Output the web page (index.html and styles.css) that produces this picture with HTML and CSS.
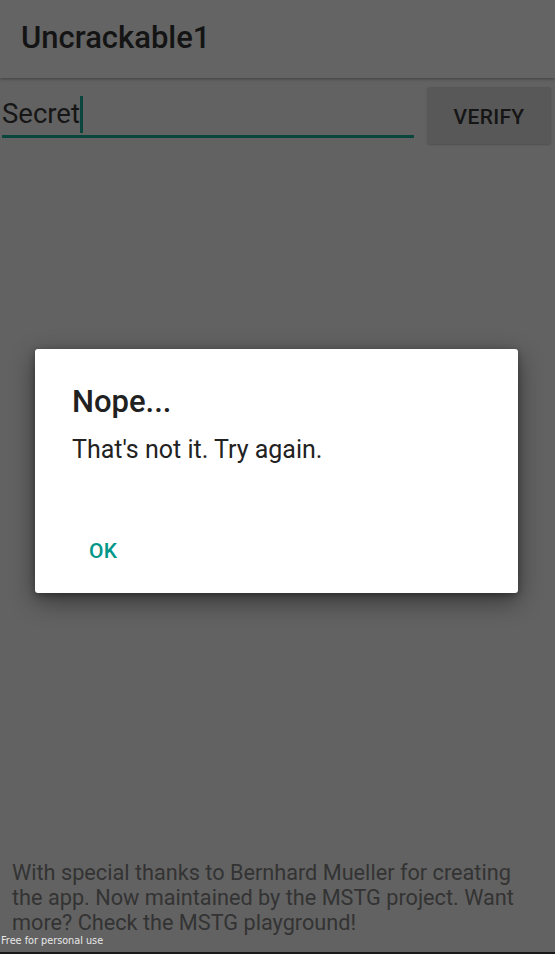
FILE: index.html
```html
<!DOCTYPE html>
<html>
<head>
<meta charset="utf-8">
<link rel="stylesheet" href="styles.css">
</head>
<body>
<div class="screen">
  <header class="appbar"><h1 class="title">Uncrackable1</h1></header>
  <div class="form">
    <div class="field"><span class="value">Secret</span><span class="cursor"></span></div>
    <div class="btn">VERIFY</div>
  </div>
  <div class="spacer"></div>
  <p class="thanks">With special thanks to Bernhard Mueller for creating the app. Now maintained by the MSTG project. Want more? Check the MSTG playground!</p>
  <div class="watermark">Free for personal use</div>
  <div class="bottomline"></div>
  <div class="dialog">
    <h2 class="dtitle">Nope...</h2>
    <p class="dbody">That's not it. Try again.</p>
    <div class="dactions"><span class="ok">OK</span></div>
  </div>
</div>
</body>
</html>
```
FILE: styles.css
```css
* { box-sizing: border-box; }
html, body { margin: 0; padding: 0; }
body { width: 555px; height: 954px; overflow: hidden; background: #626262; font-family: Roboto, "Noto Sans", sans-serif; }
.screen { position: relative; width: 555px; height: 954px; display: flex; flex-direction: column; }
.appbar { height: 78px; background: #646464; box-shadow: 0 1px 3px rgba(0,0,0,0.35); display: flex; align-items: center; padding-left: 21px; position: relative; z-index: 1; }
.title { margin: 0; font-size: 31px; font-weight: 500; color: #141414; letter-spacing: 0; padding-bottom: 4px; }
.form { display: flex; align-items: flex-start; padding: 8px 4px 0 2px; gap: 13px; }
.field { flex: 0 0 412px; height: 52px; border-bottom: 3px solid #0b463e; display: flex; align-items: center; padding-top: 7px; }
.value { font-size: 27.5px; color: #161616; line-height: 1; }
.cursor { display: inline-block; width: 3px; height: 37px; background: #0b463e; margin-left: 0; }
.btn { flex: 0 0 124px; height: 57px; margin-top: 1px; background: #585858; border-radius: 3px; box-shadow: 0 1px 2px rgba(0,0,0,0.2); display: flex; align-items: center; justify-content: center; font-size: 21px; font-weight: 500; color: #151515; letter-spacing: 0.3px; padding-top: 2px; }
.spacer { flex: 1; }
.thanks { margin: 0; padding: 0 20px 0 12px; font-size: 21.7px; line-height: 25px; color: #333333; }
.watermark { font-family: "DejaVu Sans", sans-serif; font-size: 9.7px; color: #e8e8e8; padding-left: 1px; height: 17px; line-height: 12px; margin-top: 0; }
.bottomline { height: 2px; background: #1a1a1a; }
.dialog { position: absolute; left: 35px; top: 349px; width: 483px; height: 244px; background: #fff; border-radius: 3px; box-shadow: 0 8px 24px rgba(0,0,0,0.45), 0 2px 6px rgba(0,0,0,0.3); padding: 34px 37px 0 37px; display: flex; flex-direction: column; }
.dtitle { margin: 0; font-size: 31px; font-weight: 500; color: #212121; line-height: 38px; }
.dbody { margin: 14px 0 0; font-size: 25px; color: #222; line-height: 30px; }
.dactions { margin-top: auto; height: 70px; display: flex; align-items: flex-start; padding-top: 16px; padding-left: 17px; }
.ok { font-size: 21px; font-weight: 500; color: #009688; letter-spacing: 0.3px; }
```
